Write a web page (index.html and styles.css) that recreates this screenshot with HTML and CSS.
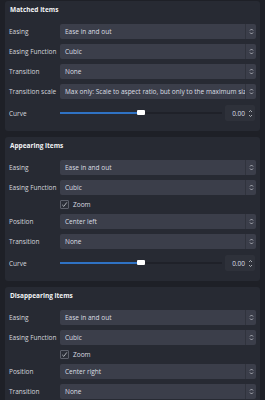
FILE: index.html
```html
<!DOCTYPE html>
<html lang="en">
<head>
    <meta charset="UTF-8">
    <title>Move transition</title>
    <link rel="stylesheet" href="styles.css">
</head>
<body>
    <div class="group">
        <div class="group-title">Matched items</div>
        <div class="row">
            <span class="label">Easing</span>
            <div class="combo"><span class="value">Ease in and out</span><span class="arrows"><svg width="5" height="7" viewBox="0 0 5 7"><path d="M1 2.5 L2.5 1 L4 2.5 M1 4.5 L2.5 6 L4 4.5" /></svg></span></div>
        </div>
        <div class="row">
            <span class="label">Easing Function</span>
            <div class="combo"><span class="value">Cubic</span><span class="arrows"><svg width="5" height="7" viewBox="0 0 5 7"><path d="M1 2.5 L2.5 1 L4 2.5 M1 4.5 L2.5 6 L4 4.5" /></svg></span></div>
        </div>
        <div class="row">
            <span class="label">Transition</span>
            <div class="combo"><span class="value">None</span><span class="arrows"><svg width="5" height="7" viewBox="0 0 5 7"><path d="M1 2.5 L2.5 1 L4 2.5 M1 4.5 L2.5 6 L4 4.5" /></svg></span></div>
        </div>
        <div class="row">
            <span class="label">Transition scale</span>
            <div class="combo"><span class="value">Max only: Scale to aspect ratio, but only to the maximum size</span><span class="arrows"><svg width="5" height="7" viewBox="0 0 5 7"><path d="M1 2.5 L2.5 1 L4 2.5 M1 4.5 L2.5 6 L4 4.5" /></svg></span></div>
        </div>
        <div class="row curve-row">
            <span class="label">Curve</span>
            <div class="slider-line">
                <div class="slider"><div class="fill" style="width: 48%"></div><div class="handle"></div></div>
                <div class="spin"><span>0.00</span><svg width="5" height="9" viewBox="0 0 5 9"><path d="M1 3 L2.5 1.5 L4 3 M1 6 L2.5 7.5 L4 6" /></svg></div>
            </div>
        </div>
    </div>

    <div class="group">
        <div class="group-title">Appearing items</div>
        <div class="row">
            <span class="label">Easing</span>
            <div class="combo"><span class="value">Ease in and out</span><span class="arrows"><svg width="5" height="7" viewBox="0 0 5 7"><path d="M1 2.5 L2.5 1 L4 2.5 M1 4.5 L2.5 6 L4 4.5" /></svg></span></div>
        </div>
        <div class="row">
            <span class="label">Easing Function</span>
            <div class="combo"><span class="value">Cubic</span><span class="arrows"><svg width="5" height="7" viewBox="0 0 5 7"><path d="M1 2.5 L2.5 1 L4 2.5 M1 4.5 L2.5 6 L4 4.5" /></svg></span></div>
        </div>
        <div class="row check-row">
            <span class="label"></span>
            <label class="check"><span class="box"><svg width="7" height="7" viewBox="0 0 7 7"><path d="M1.2 3.8 L2.8 5.4 L5.8 1.4" /></svg></span>Zoom</label>
        </div>
        <div class="row">
            <span class="label">Position</span>
            <div class="combo"><span class="value">Center left</span><span class="arrows"><svg width="5" height="7" viewBox="0 0 5 7"><path d="M1 2.5 L2.5 1 L4 2.5 M1 4.5 L2.5 6 L4 4.5" /></svg></span></div>
        </div>
        <div class="row">
            <span class="label">Transition</span>
            <div class="combo"><span class="value">None</span><span class="arrows"><svg width="5" height="7" viewBox="0 0 5 7"><path d="M1 2.5 L2.5 1 L4 2.5 M1 4.5 L2.5 6 L4 4.5" /></svg></span></div>
        </div>
        <div class="row curve-row">
            <span class="label">Curve</span>
            <div class="slider-line">
                <div class="slider"><div class="fill" style="width: 48%"></div><div class="handle"></div></div>
                <div class="spin"><span>0.00</span><svg width="5" height="9" viewBox="0 0 5 9"><path d="M1 3 L2.5 1.5 L4 3 M1 6 L2.5 7.5 L4 6" /></svg></div>
            </div>
        </div>
    </div>

    <div class="group">
        <div class="group-title">Disappearing items</div>
        <div class="row">
            <span class="label">Easing</span>
            <div class="combo"><span class="value">Ease in and out</span><span class="arrows"><svg width="5" height="7" viewBox="0 0 5 7"><path d="M1 2.5 L2.5 1 L4 2.5 M1 4.5 L2.5 6 L4 4.5" /></svg></span></div>
        </div>
        <div class="row">
            <span class="label">Easing Function</span>
            <div class="combo"><span class="value">Cubic</span><span class="arrows"><svg width="5" height="7" viewBox="0 0 5 7"><path d="M1 2.5 L2.5 1 L4 2.5 M1 4.5 L2.5 6 L4 4.5" /></svg></span></div>
        </div>
        <div class="row check-row">
            <span class="label"></span>
            <label class="check"><span class="box"><svg width="7" height="7" viewBox="0 0 7 7"><path d="M1.2 3.8 L2.8 5.4 L5.8 1.4" /></svg></span>Zoom</label>
        </div>
        <div class="row">
            <span class="label">Position</span>
            <div class="combo"><span class="value">Center right</span><span class="arrows"><svg width="5" height="7" viewBox="0 0 5 7"><path d="M1 2.5 L2.5 1 L4 2.5 M1 4.5 L2.5 6 L4 4.5" /></svg></span></div>
        </div>
        <div class="row">
            <span class="label">Transition</span>
            <div class="combo"><span class="value">None</span><span class="arrows"><svg width="5" height="7" viewBox="0 0 5 7"><path d="M1 2.5 L2.5 1 L4 2.5 M1 4.5 L2.5 6 L4 4.5" /></svg></span></div>
        </div>
    </div>
</body>
</html>
```

FILE: styles.css
```css
body {
    margin: 0;
    padding: 1px 5px 0 5px;
    background-color: #1e2027;
    font-family: "Open Sans", "Noto Sans", sans-serif;
    font-size: 6.5px;
    color: #dcdee4;
    height: 400px;
    overflow: hidden;
}

.group {
    background: #272a33;
    border-radius: 3px;
    padding: 3px 4px 10px 4px;
    margin-bottom: 6px;
    display: flex;
    flex-direction: column;
    gap: 5px;
}

.group-title {
    font-weight: bold;
    color: #f2f3f5;
    line-height: 12px;
    padding-left: 1px;
    margin-bottom: 3px;
}

.row {
    display: grid;
    grid-template-columns: 51px 1fr;
    align-items: center;
    height: 15px;
}

.label {
    white-space: nowrap;
    color: #d6d8de;
}

.combo {
    display: flex;
    align-items: center;
    height: 15px;
    background: #3b3e4a;
    border-radius: 2px;
    overflow: hidden;
}

.combo .value {
    flex: 1;
    padding-left: 5px;
    white-space: nowrap;
    overflow: hidden;
}

.combo .arrows {
    width: 10px;
    height: 15px;
    border-left: 1px solid #30333d;
    display: flex;
    align-items: center;
    justify-content: center;
}

.arrows path,
.spin path {
    fill: none;
    stroke: #c8cad1;
    stroke-width: 0.8;
}

.curve-row {
    height: 16px;
    margin-top: 1px;
}

.slider-line {
    display: flex;
    align-items: center;
    gap: 3px;
}

.slider {
    flex: 1;
    height: 2px;
    background: #1f2129;
    position: relative;
}

.slider .fill {
    height: 2px;
    background: #2f72c4;
}

.slider .handle {
    position: absolute;
    left: 48%;
    top: -2px;
    width: 8px;
    height: 5px;
    margin-left: -1px;
    background: #ffffff;
    border-radius: 1px;
}

.spin {
    width: 30px;
    height: 16px;
    background: #2e313a;
    border-radius: 2px;
    display: flex;
    align-items: center;
    justify-content: flex-end;
    gap: 3px;
    padding-right: 2px;
    box-sizing: border-box;
    margin-right: 1px;
}

.check-row {
    height: 9px;
    line-height: 9px;
}

.check {
    display: flex;
    align-items: center;
    gap: 4px;
    height: 9px;
}

.check .box {
    width: 9px;
    height: 9px;
    box-sizing: border-box;
    border: 1px solid #5d606b;
    border-radius: 1px;
    background: #2b2e37;
    display: flex;
    align-items: center;
    justify-content: center;
}

.check path {
    fill: none;
    stroke: #c9cbd2;
    stroke-width: 0.8;
}
```
